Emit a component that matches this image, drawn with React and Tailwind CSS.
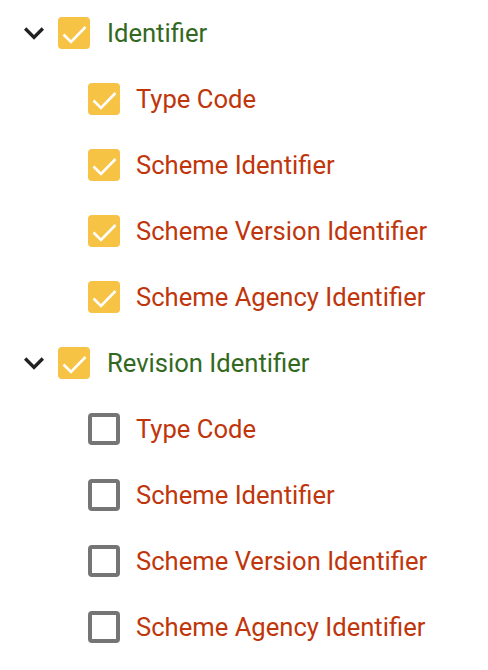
import React from 'react';

const groups = [
    {
        key: 'identifier',
        label: 'Identifier',
        checked: true,
        children: [
            { key: 'type-code', label: 'Type Code', checked: true },
            { key: 'scheme-id', label: 'Scheme Identifier', checked: true },
            { key: 'scheme-version', label: 'Scheme Version Identifier', checked: true },
            { key: 'scheme-agency', label: 'Scheme Agency Identifier', checked: true },
        ],
    },
    {
        key: 'revision',
        label: 'Revision Identifier',
        checked: true,
        children: [
            { key: 'type-code', label: 'Type Code', checked: false },
            { key: 'scheme-id', label: 'Scheme Identifier', checked: false },
            { key: 'scheme-version', label: 'Scheme Version Identifier', checked: false },
            { key: 'scheme-agency', label: 'Scheme Agency Identifier', checked: false },
        ],
    },
];

const Checkbox = ({ checked }) =>
    checked ? (
        <span className="block w-8 h-8 rounded-[4px] bg-[#f6c344] shrink-0">
            <svg viewBox="0 0 32 32" className="w-8 h-8" fill="none" stroke="white" strokeWidth="2.6">
                <path d="M5.5 17.5l7.5 7.5 14.5-15" />
            </svg>
        </span>
    ) : (
        <span className="block w-8 h-8 rounded-[4px] border-4 border-[#757575] bg-white shrink-0" />
    );

const Chevron = () => (
    <svg viewBox="0 0 24 24" className="w-10 h-10" fill="#212121">
        <path d="M16.59 8.59L12 13.17 7.41 8.59 6 10l6 6 6-6z" />
    </svg>
);

export default function App() {
    return (
        <div className="bg-white min-h-screen" style={{ fontFamily: 'Roboto, "Liberation Sans", sans-serif' }}>
            {groups.map((group) => (
                <div key={group.key}>
                    <div className="flex items-center h-[66px]">
                        <span className="ml-[14px] w-10 flex justify-center">
                            <Chevron />
                        </span>
                        <span className="ml-1">
                            <Checkbox checked={group.checked} />
                        </span>
                        <span className="ml-[17px] text-[25.6px] text-[#33691e]">{group.label}</span>
                    </div>
                    {group.children.map((child) => (
                        <div key={child.key} className="flex items-center h-[66px] pl-[88px]">
                            <Checkbox checked={child.checked} />
                            <span className="ml-[16px] text-[25.6px] text-[#bf360c]">{child.label}</span>
                        </div>
                    ))}
                </div>
            ))}
        </div>
    );
}
